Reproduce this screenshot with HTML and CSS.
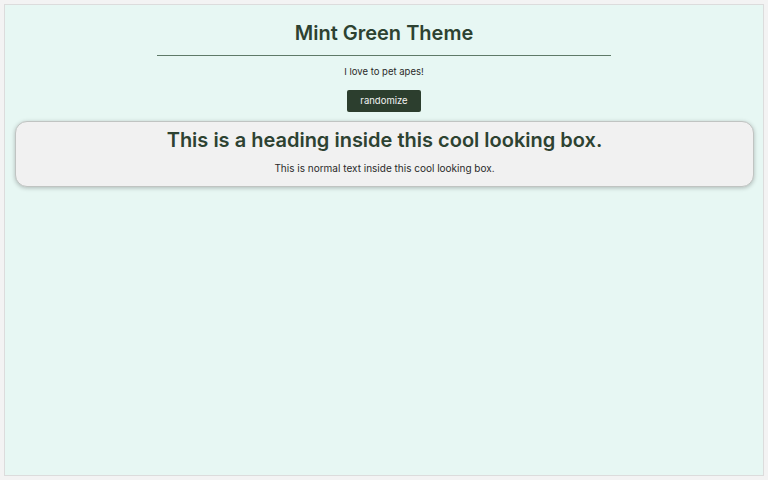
FILE: index.html
```html
<!DOCTYPE html>
<html lang="en">
<head>
<meta charset="utf-8">
<title>Mint Green Theme</title>
<link rel="stylesheet" href="styles.css">
</head>
<body>
  <main class="page">
    <h1 class="title">Mint Green Theme</h1>
    <hr class="rule">
    <p class="tagline">I love to pet apes!</p>
    <button class="btn" type="button">randomize</button>
    <section class="card">
      <h2 class="card-heading">This is a heading inside this cool looking box.</h2>
      <p class="card-text">This is normal text inside this cool looking box.</p>
    </section>
  </main>
</body>
</html>
```
FILE: styles.css
```css
html, body {
  margin: 0;
  padding: 0;
  height: 100%;
}

body {
  background: #f3f3f3;
  padding: 4px;
  box-sizing: border-box;
  font-family: Inter, "Noto Sans", sans-serif;
  color: #2a3a2c;
}

.page {
  height: 100%;
  box-sizing: border-box;
  background: #e7f7f3;
  border: 1px solid #dcdcdc;
  display: flex;
  flex-direction: column;
  align-items: center;
  padding: 8px 0;
}

.title {
  margin: 8px 0 0;
  font-size: 20px;
  font-weight: 600;
  line-height: 24px;
  color: #2d4231;
}

.rule {
  width: 60%;
  border: 0;
  border-top: 1px solid #5f7a68;
  margin: 10px 0 0;
}

.tagline {
  margin: 10px 0 0;
  font-size: 9.5px;
  line-height: 12px;
  color: #2a2a2a;
}

.btn {
  margin-top: 12px;
  background: #2c3e2e;
  color: #f2f2f2;
  border: 0;
  border-radius: 2px;
  font-family: inherit;
  font-size: 9.5px;
  line-height: 12px;
  padding: 5px 10px;
  width: 74px;
  height: 22px;
}

.card {
  align-self: stretch;
  margin: 9px 9px 0 10px;
  background: #f1f1f1;
  border: 1px solid #c0c4c2;
  border-radius: 12px;
  box-shadow: 0 1px 4px rgba(0, 0, 0, 0.25);
  display: flex;
  flex-direction: column;
  align-items: center;
  padding: 6px 10px 12px;
}

.card-heading {
  margin: 0;
  font-size: 20px;
  font-weight: 600;
  line-height: 24px;
  color: #2d4231;
}

.card-text {
  margin: 10px 0 0;
  font-size: 10px;
  line-height: 12px;
  color: #2a2a2a;
}
```
